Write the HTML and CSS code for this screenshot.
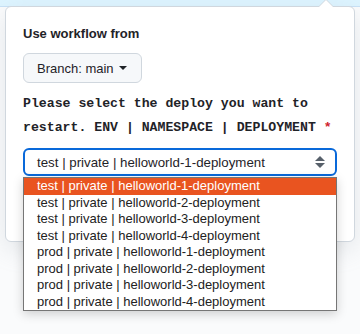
FILE: index.html
```html
<!DOCTYPE html>
<html lang="en">
<head>
    <meta charset="UTF-8">
    <meta name="viewport" content="width=device-width, initial-scale=1.0">
    <title>Run workflow</title>
    <link rel="stylesheet" href="styles.css">
</head>
<body>
    <div class="topbar"></div>
    <div class="popover">
        <h3 class="heading">Use workflow from</h3>
        <button class="branch">Branch: main <span class="caret"></span></button>

        <label class="field-label">Please select the deploy you want to restart. ENV | NAMESPACE | DEPLOYMENT <span class="required">*</span></label>

        <div class="select-wrap">
            <div class="select">
                <span>test | private | helloworld-1-deployment</span>
                <svg class="updown" width="12" height="16" viewBox="0 0 12 16">
                    <path d="M6 2 L11 7 H1 Z" fill="#57606a"/>
                    <path d="M6 14 L11 9 H1 Z" fill="#57606a"/>
                </svg>
            </div>
            <!-- open dropdown list, drawn over the rest of the card -->
            <ul class="options">
                <li class="active">test | private | helloworld-1-deployment</li>
                <li>test | private | helloworld-2-deployment</li>
                <li>test | private | helloworld-3-deployment</li>
                <li>test | private | helloworld-4-deployment</li>
                <li>prod | private | helloworld-1-deployment</li>
                <li>prod | private | helloworld-2-deployment</li>
                <li>prod | private | helloworld-3-deployment</li>
                <li>prod | private | helloworld-4-deployment</li>
            </ul>
        </div>
    </div>
</body>
</html>
```

FILE: styles.css
```css
html,
body {
    height: 100%;
}

body {
    margin: 0;
    min-height: 334px;
    font-family: 'Liberation Sans', Arial, sans-serif;
    background: #fafbfc;
    color: #1f2328;
}

.topbar {
    height: 6px;
    background: #ddf4ff;
    border-bottom: 1px solid #c8e1f5;
}

.popover {
    position: relative;
    width: 314px;
    margin: -1px 0 0 5px;
    padding: 17px 17px 65px 17px;
    background: #fff;
    border: 1px solid #d0d7de;
    border-radius: 6px;
    box-shadow: 0 8px 24px rgba(140, 149, 159, 0.2);
}

.popover::before,
.popover::after {
    content: "";
    position: absolute;
    left: 312px;
    border: 8px solid transparent;
}

.popover::before {
    top: -16px;
    border-bottom-color: #d0d7de;
}

.popover::after {
    top: -15px;
    border-bottom-color: #fff;
}

.heading {
    margin: 0;
    font-size: 13px;
    line-height: 20px;
    font-weight: bold;
}

.branch {
    display: flex;
    align-items: center;
    gap: 5px;
    height: 30px;
    margin-top: 9px;
    padding: 0 14px 0 13px;
    font-family: inherit;
    font-size: 13px;
    color: #1f2328;
    background: #f6f8fa;
    border: 1px solid #d0d7de;
    border-radius: 6px;
}

.caret {
    border-top: 4px solid #1f2328;
    border-left: 4px solid transparent;
    border-right: 4px solid transparent;
}

.field-label {
    display: block;
    margin-top: 9px;
    font-family: 'Liberation Mono', monospace;
    font-size: 13.2px;
    font-weight: bold;
    line-height: 24px;
}

.required {
    color: #cf222e;
}

.select-wrap {
    position: relative;
    margin-top: 8px;
}

.select {
    display: flex;
    align-items: center;
    justify-content: space-between;
    height: 24px;
    padding: 0 9px 0 12px;
    font-size: 13.3px;
    border: 2px solid #0969da;
    border-radius: 6px;
}

.options {
    position: absolute;
    top: 29px;
    left: 0;
    right: 0;
    margin: 0;
    padding: 0;
    list-style: none;
    background: #fff;
    border: 1px solid #767676;
    box-shadow: 0 3px 10px rgba(0, 0, 0, 0.18);
    z-index: 2;
}

.options li {
    height: 16.5px;
    line-height: 16.5px;
    padding-left: 13px;
    font-size: 13px;
    color: #222;
}

.options li.active {
    background: #e95420;
    color: #fff;
}
```
